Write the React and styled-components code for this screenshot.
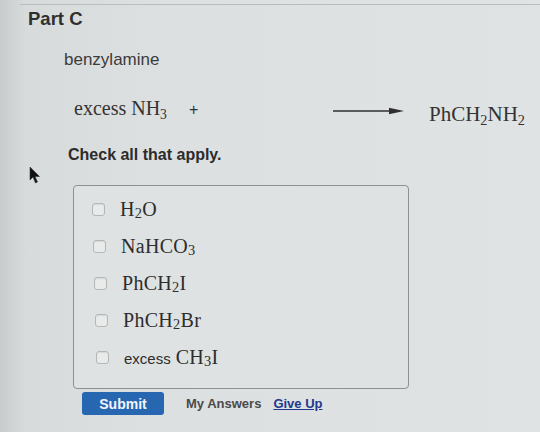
import React from 'react'
import styled, { createGlobalStyle } from 'styled-components'

const GlobalStyle = createGlobalStyle`
  html, body {
    margin: 0;
    padding: 0;
    background: #dcdfe0;
  }
  #root {
    min-height: 432px;
  }
`

const Page = styled.div`
  position: relative;
  box-sizing: border-box;
  width: 540px;
  height: 432px;
  overflow: hidden;
  padding-top: 4px;
  background: linear-gradient(to right, #c8cccd 0, #d8dbdc 26px, #dde0e1 160px, #e0e3e4 100%);
  font-family: "Liberation Sans", Arial, sans-serif;
  color: #333;
`

const Panel = styled.section`
  border-top: 1px solid #b9bdbe;
  margin-left: 20px;
  padding: 3px 0 0 8px;
`

const PartTitle = styled.h2`
  margin: 0;
  font-size: 18.5px;
  line-height: 22px;
  font-weight: 700;
  color: #2f2f2f;
`

const Body = styled.div`
  display: flex;
  flex-direction: column;
  align-items: flex-start;
`

const Prompt = styled.div`
  margin: 20px 0 0 36px;
  font-size: 17px;
  line-height: 20px;
  color: #3b3b3b;
`

const Equation = styled.div`
  display: flex;
  align-items: center;
  margin: 22px 0 0 46px;
  font-family: "Liberation Serif", "Times New Roman", serif;
  font-size: 20px;
  line-height: 24px;
  color: #333;
`

const Reactants = styled.span`
  width: 259px;
`

const Plus = styled.span`
  margin-left: 22px;
  font-family: "Liberation Sans", Arial, sans-serif;
  font-size: 16px;
`

const Product = styled.span`
  margin: 10px 0 0 25px;
  font-size: 21px;
`

const Sub = styled.sub`
  font-size: ${p => (p.$math ? '72%' : '68%')};
  vertical-align: ${p => (p.$math ? '-0.12em' : '-0.3em')};
  line-height: 0;
`

const Arrow = styled.svg`
  display: block;
  margin-top: 4px;
`

const Instruction = styled.div`
  margin: 19px 0 0 40px;
  font-size: 16px;
  line-height: 19px;
  font-weight: 700;
  color: #2c2c2c;
`

const Choices = styled.ul`
  box-sizing: border-box;
  list-style: none;
  width: 336px;
  margin: 21px 0 0 45px;
  padding: 5px 0 12px 18px;
  border: 1px solid #8d9192;
  border-radius: 4px;
  background: #dfe2e3;
`

const Choice = styled.li`
  display: flex;
  align-items: center;
  height: 37px;
  padding-left: ${p => p.$shift}px;
`

const Box = styled.span`
  box-sizing: border-box;
  flex: none;
  width: 13px;
  height: 13px;
  border: 1px solid #b3b7b8;
  border-radius: 3px;
  background: #e9ebeb;
  box-shadow: inset 0 1px 1px rgba(0, 0, 0, 0.08);
`

const Label = styled.span`
  margin-left: 15px;
  font-family: "Liberation Serif", "Times New Roman", serif;
  font-size: 20px;
  letter-spacing: 0.3px;
  color: #2d2d2d;
`

const Word = styled.span`
  font-family: "Liberation Sans", Arial, sans-serif;
  font-size: 15px;
  letter-spacing: 0;
  margin-right: 5px;
`

const Actions = styled.div`
  display: flex;
  align-items: center;
  margin: 3px 0 0 54px;
`

const SubmitButton = styled.button`
  width: 82px;
  height: 23px;
  padding: 0;
  border: none;
  border-radius: 3px;
  background: #2767b2;
  color: #f2f5fa;
  font-family: "Liberation Sans", Arial, sans-serif;
  font-size: 14px;
  font-weight: 700;
`

const TextLink = styled.a`
  margin-left: ${p => p.$gap}px;
  font-size: 13px;
  font-weight: 700;
  color: ${p => (p.$underline ? '#1e3a8c' : '#4a4a4a')};
  text-decoration: ${p => (p.$underline ? 'underline' : 'none')};
`

const Cursor = styled.svg`
  position: absolute;
  left: 29px;
  top: 166px;
`

const choices = [
  { id: 'h2o', shift: 0, label: <>H<Sub $math>2</Sub>O</> },
  { id: 'nahco3', shift: 1, label: <>NaHCO<Sub $math>3</Sub></> },
  { id: 'phch2i', shift: 2, label: <>PhCH<Sub $math>2</Sub>I</> },
  { id: 'phch2br', shift: 3, label: <>PhCH<Sub $math>2</Sub>Br</> },
  { id: 'ch3i', shift: 4, label: <><Word>excess</Word>CH<Sub $math>3</Sub>I</> },
]

export default function App() {
  return (
    <Page>
      <GlobalStyle />
      <Panel>
        <PartTitle>Part C</PartTitle>
        <Body>
          <Prompt>benzylamine</Prompt>
          <Equation>
            <Reactants>
              excess NH<Sub>3</Sub>
              <Plus>+</Plus>
            </Reactants>
            <Arrow width="71" height="8" viewBox="0 0 71 8">
              <line x1="0" y1="4" x2="60" y2="4" stroke="#2f2f2f" strokeWidth="1.6" />
              <path d="M56 0.8 L71 4 L56 7.2 Z" fill="#2f2f2f" />
            </Arrow>
            <Product>
              PhCH<Sub>2</Sub>NH<Sub>2</Sub>
            </Product>
          </Equation>
          <Instruction>Check all that apply.</Instruction>
          <Choices>
            {choices.map(c => (
              <Choice key={c.id} $shift={c.shift}>
                <Box />
                <Label>{c.label}</Label>
              </Choice>
            ))}
          </Choices>
          <Actions>
            <SubmitButton>Submit</SubmitButton>
            <TextLink $gap={22}>My Answers</TextLink>
            <TextLink $gap={12} $underline>Give Up</TextLink>
          </Actions>
        </Body>
      </Panel>
      <Cursor width="12" height="18" viewBox="0 0 12 18">
        <path d="M1 1 L1 14 L4 11 L6.5 17 L8.5 16 L6 10.5 L10.5 10.5 Z" fill="#111" stroke="#333" strokeWidth="0.6" />
      </Cursor>
    </Page>
  )
}
